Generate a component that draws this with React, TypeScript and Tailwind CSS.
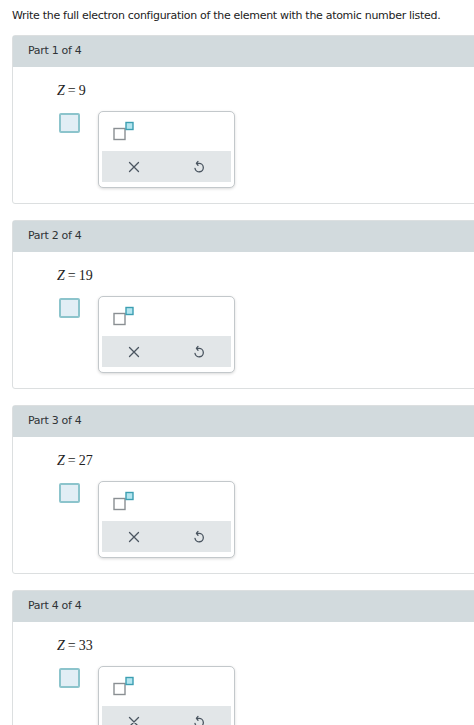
const parts = [
  { n: 1, z: 9 },
  { n: 2, z: 19 },
  { n: 3, z: 27 },
  { n: 4, z: 33 },
];

function SuperscriptIcon() {
  return (
    <svg width="22" height="20" viewBox="0 0 22 20">
      <rect x="1" y="7.5" width="11" height="11" fill="#fff" stroke="#8a8f93" strokeWidth="1.4" />
      <rect x="13" y="1.5" width="7" height="7" fill="#b5e6f0" stroke="#3d9fb2" strokeWidth="1.4" />
    </svg>
  );
}

function ClearIcon() {
  return (
    <svg width="12" height="12" viewBox="0 0 12 12">
      <path d="M1.5 1.5 L10.5 10.5 M10.5 1.5 L1.5 10.5" stroke="#4a5560" strokeWidth="1.3" strokeLinecap="round" />
    </svg>
  );
}

function UndoIcon() {
  return (
    <svg width="12" height="14" viewBox="0 0 12 14">
      <path
        d="M3.6 3.4 L6 3.4 A4.2 4.2 0 1 1 2 8.4"
        fill="none"
        stroke="#4a5560"
        strokeWidth="1.3"
        strokeLinecap="round"
      />
      <path d="M5 1.4 L3.4 3.4 L5 5.2" fill="none" stroke="#4a5560" strokeWidth="1.3" strokeLinecap="round" strokeLinejoin="round" />
    </svg>
  );
}

function PartCard({ n, z }: { n: number; z: number }) {
  return (
    <div className="w-[480px] h-[169px] border border-[#dcdfe0] rounded-[3px] bg-white">
      <div className="h-[31px] bg-[#d2dadd] pl-[15px] flex items-center text-[11px] tracking-[-0.3px] text-[#2f3336]">
        Part {n} of 4
      </div>
      <div className="pl-[44px] pt-[15px]">
        <div className="h-[17px] text-[14px] leading-[17px] text-[#222] font-['Liberation_Serif',serif]">
          <span className="italic">Z</span>
          <span className="mx-[3px]">=</span>
          {z}
        </div>
        <div className="flex mt-[12px]">
          <div className="mt-[2px] ml-[2px] w-[21px] h-[20px] border-2 border-[#8cc4cc] bg-[#e2eef5] rounded-[2px]" />
          <div className="ml-[18px] w-[137px] h-[77px] border border-[#c3c8cb] rounded-[5px] shadow-[0_1px_3px_rgba(0,0,0,0.15)] bg-white flex flex-col px-[3px] pb-[5px]">
            <div className="flex-1 pl-[11px] pt-[9px]">
              <SuperscriptIcon />
            </div>
            <div className="h-[31px] bg-[#e2e6e8] flex items-center">
              <div className="flex-1 flex justify-center">
                <ClearIcon />
              </div>
              <div className="flex-1 flex justify-center">
                <UndoIcon />
              </div>
            </div>
          </div>
        </div>
      </div>
    </div>
  );
}

export default function App() {
  return (
    <div className="w-[474px] h-[725px] overflow-hidden bg-white font-['DejaVu_Sans',Verdana,sans-serif]">
      <div className="pl-[12px] pt-[9px] text-[11px] tracking-[-0.3px] leading-[14px] text-[#222] whitespace-nowrap">
        Write the full electron configuration of the element with the atomic number listed.
      </div>
      <div className="pl-[12px] pt-[12px] flex flex-col gap-[16px]">
        {parts.map((p) => (
          <PartCard key={p.n} n={p.n} z={p.z} />
        ))}
      </div>
    </div>
  );
}
